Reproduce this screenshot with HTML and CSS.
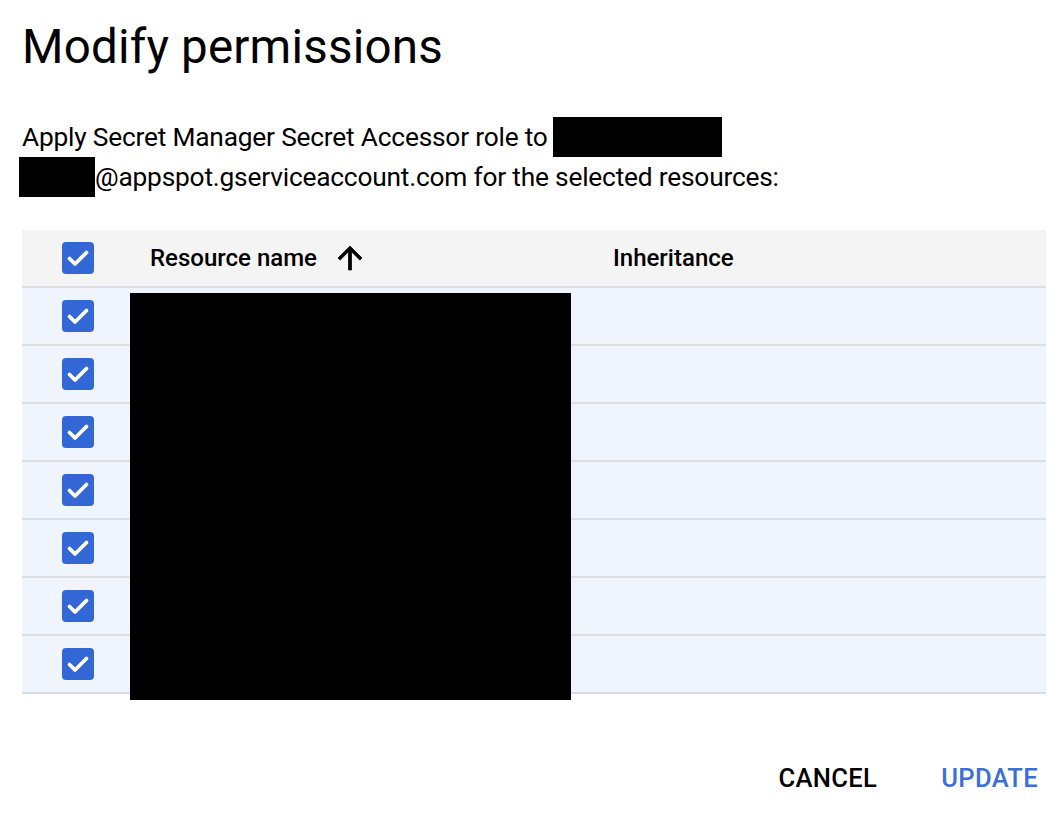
FILE: index.html
```html
<!DOCTYPE html>
<html>
<head>
<meta charset="utf-8">
<link rel="stylesheet" href="styles.css">
</head>
<body>
<div class="dialog">
  <h1 class="title">Modify permissions</h1>
  <p class="desc">Apply Secret Manager Secret Accessor role to<span class="redact r1"></span><br><span class="redact r2"></span>@appspot.gserviceaccount.com for the selected resources:</p>
  <div class="table">
    <div class="row head">
      <div class="cell cb"><span class="check"><svg viewBox="0 0 32 32"><path d="M7.5 16.5l5.5 5.5 11.5-11.5" fill="none" stroke="#fff" stroke-width="3.8" stroke-linecap="round" stroke-linejoin="round"/></svg></span></div>
      <div class="cell name">Resource name <svg class="arrow" viewBox="0 0 24 24"><path d="M4 12l1.41 1.41L11 7.83V20h2V7.83l5.58 5.59L20 12l-8-8-8 8z" stroke="#000" stroke-width="0.5"/></svg></div>
      <div class="cell inh">Inheritance</div>
    </div>
    <div class="row"><div class="cell cb"><span class="check"><svg viewBox="0 0 32 32"><path d="M7.5 16.5l5.5 5.5 11.5-11.5" fill="none" stroke="#fff" stroke-width="3.8" stroke-linecap="round" stroke-linejoin="round"/></svg></span></div><div class="cell name"></div><div class="cell inh"></div></div>
    <div class="row"><div class="cell cb"><span class="check"><svg viewBox="0 0 32 32"><path d="M7.5 16.5l5.5 5.5 11.5-11.5" fill="none" stroke="#fff" stroke-width="3.8" stroke-linecap="round" stroke-linejoin="round"/></svg></span></div><div class="cell name"></div><div class="cell inh"></div></div>
    <div class="row"><div class="cell cb"><span class="check"><svg viewBox="0 0 32 32"><path d="M7.5 16.5l5.5 5.5 11.5-11.5" fill="none" stroke="#fff" stroke-width="3.8" stroke-linecap="round" stroke-linejoin="round"/></svg></span></div><div class="cell name"></div><div class="cell inh"></div></div>
    <div class="row"><div class="cell cb"><span class="check"><svg viewBox="0 0 32 32"><path d="M7.5 16.5l5.5 5.5 11.5-11.5" fill="none" stroke="#fff" stroke-width="3.8" stroke-linecap="round" stroke-linejoin="round"/></svg></span></div><div class="cell name"></div><div class="cell inh"></div></div>
    <div class="row"><div class="cell cb"><span class="check"><svg viewBox="0 0 32 32"><path d="M7.5 16.5l5.5 5.5 11.5-11.5" fill="none" stroke="#fff" stroke-width="3.8" stroke-linecap="round" stroke-linejoin="round"/></svg></span></div><div class="cell name"></div><div class="cell inh"></div></div>
    <div class="row"><div class="cell cb"><span class="check"><svg viewBox="0 0 32 32"><path d="M7.5 16.5l5.5 5.5 11.5-11.5" fill="none" stroke="#fff" stroke-width="3.8" stroke-linecap="round" stroke-linejoin="round"/></svg></span></div><div class="cell name"></div><div class="cell inh"></div></div>
    <div class="row"><div class="cell cb"><span class="check"><svg viewBox="0 0 32 32"><path d="M7.5 16.5l5.5 5.5 11.5-11.5" fill="none" stroke="#fff" stroke-width="3.8" stroke-linecap="round" stroke-linejoin="round"/></svg></span></div><div class="cell name"></div><div class="cell inh"></div></div>
    <div class="redact-block"></div>
  </div>
  <div class="actions">
    <button class="btn cancel">CANCEL</button>
    <button class="btn update">UPDATE</button>
  </div>
</div>
</body>
</html>
```
FILE: styles.css
```css
html, body {
  margin: 0;
  padding: 0;
  background: #fff;
}
body {
  font-family: Roboto, "Liberation Sans", sans-serif;
  color: #000;
}
.dialog {
  width: 1062px;
  height: 826px;
  box-sizing: border-box;
  padding: 0 16px 0 22px;
}
.title {
  margin: 0;
  padding-top: 20px;
  font-size: 47.5px;
  font-weight: 400;
  line-height: 54px;
  letter-spacing: 0.2px;
}
.desc {
  margin: 43px 0 0 0;
  font-size: 26.3px;
  line-height: 40px;
  letter-spacing: -0.2px;
}
.redact {
  display: inline-block;
  background: #000;
  vertical-align: top;
  height: 40px;
}
.r1 { width: 169px; margin-left: 5px; }
.r2 { width: 76px; margin-left: -3px; }
.table {
  position: relative;
  margin-top: 33px;
  width: 1024px;
}
.row {
  display: flex;
  align-items: center;
  height: 56px;
  border-bottom: 2px solid #dcdde0;
  background: #f0f4fd;
}
.row.head {
  height: 56px;
  background: #f4f4f4;
}
.cell {
  box-sizing: border-box;
}
.cell.cb {
  width: 108px;
  display: flex;
  justify-content: center;
  padding-left: 4px;
}
.check {
  display: flex;
  align-items: center;
  justify-content: center;
  width: 32px;
  height: 32px;
  border-radius: 4px;
  background: #3367d6;
}
.check svg {
  width: 32px;
  height: 32px;
}
.cell.name {
  width: 463px;
  padding-left: 20px;
  display: flex;
  align-items: center;
  font-size: 24px;
  font-weight: 500;
}
.arrow {
  width: 36px;
  height: 36px;
  margin-left: 15px;
  margin-top: -1px;
}
.cell.inh {
  flex: 1;
  padding-left: 20px;
  font-size: 24px;
  font-weight: 500;
}
.redact-block {
  position: absolute;
  left: 108px;
  top: 63px;
  width: 441px;
  height: 407px;
  background: #000;
}
.actions {
  display: flex;
  justify-content: flex-end;
  margin-top: 61px;
}
.btn {
  font-family: Roboto, "Liberation Sans", sans-serif;
  font-size: 25.6px;
  font-weight: 500;
  letter-spacing: 0.3px;
  background: none;
  border: none;
  padding: 8px 0;
  cursor: pointer;
}
.cancel { color: #000; margin-right: 64px; }
.update { color: #3a6fd8; margin-right: 8px; }
```
